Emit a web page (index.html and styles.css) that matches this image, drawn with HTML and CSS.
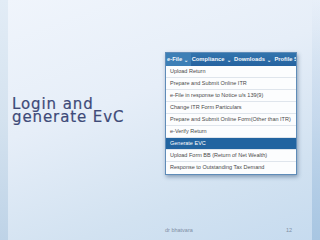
FILE: index.html
```html
<!DOCTYPE html>
<html>
<head>
<meta charset="utf-8">
<link rel="stylesheet" href="styles.css">
</head>
<body>
<div class="slide">
  <div class="strip-left"></div>
  <div class="main">
    <div class="content">
      <h1 class="title">Login and<br>generate EvC</h1>
      <div class="menu">
        <div class="bar">
          <span class="tab active">e-File <i class="caret">⌄</i></span>
          <span class="tab">Compliance <i class="caret">⌄</i></span>
          <span class="tab">Downloads <i class="caret">⌄</i></span>
          <span class="tab">Profile S</span>
        </div>
        <ul class="items">
          <li>Upload Return</li>
          <li>Prepare and Submit Online ITR</li>
          <li>e-File in response to Notice u/s 139(9)</li>
          <li>Change ITR Form Particulars</li>
          <li>Prepare and Submit Online Form(Other than ITR)</li>
          <li>e-Verify Return</li>
          <li class="selected">Generate EVC</li>
          <li>Upload Form BB (Return of Net Wealth)</li>
          <li>Response to Outstanding Tax Demand</li>
        </ul>
      </div>
    </div>
    <div class="footer">
      <span class="author">dr bhatvara</span>
      <span class="page">12</span>
    </div>
  </div>
  <div class="strip-right"></div>
</div>
</body>
</html>
```

FILE: styles.css
```css
html, body {
  margin: 0;
  padding: 0;
}
body {
  width: 320px;
  height: 240px;
  overflow: hidden;
}
.slide {
  display: flex;
  width: 320px;
  height: 240px;
  background: linear-gradient(160deg, #f0f5fc 0%, #e6eef8 40%, #d2e2f1 75%, #c6dbef 100%);
}
.strip-left {
  width: 8px;
  flex: none;
  background: linear-gradient(180deg, #e2ecf6 0%, #d4e2ef 50%, #bed3e7 100%);
}
.strip-right {
  width: 8px;
  flex: none;
  background: linear-gradient(180deg, rgba(200,218,236,0) 0%, rgba(180,204,230,0.5) 50%, #a8c6e2 100%);
}
.main {
  flex: 1;
  display: flex;
  flex-direction: column;
}
.content {
  display: flex;
  align-items: flex-start;
  padding-top: 52px;
  height: 170px;
}
.title {
  margin: 46px 0 0 4px;
  width: 153px;
  flex: none;
  font-family: "DejaVu Sans", sans-serif;
  font-weight: normal;
  font-size: 15px;
  line-height: 13px;
  color: #3e4a78;
  letter-spacing: 0.9px;
  -webkit-text-stroke: 0.2px #3e4a78;
}
.menu {
  width: 130px;
  flex: none;
  border: 1px solid #5f8cb8;
  box-shadow: 1px 2px 4px rgba(40, 70, 110, 0.45);
  background: #ffffff;
  font-family: "Liberation Sans", Arial, sans-serif;
  overflow: hidden;
}
.bar {
  display: flex;
  height: 13px;
  align-items: center;
  background: linear-gradient(180deg, #3274ad 0%, #2663a0 100%);
  white-space: nowrap;
  overflow: hidden;
}
.tab {
  color: #f4f8fc;
  font-size: 5.8px;
  font-weight: bold;
  padding: 0 2.5px 0 1px;
  height: 13px;
  line-height: 13px;
  display: flex;
  align-items: center;
  flex: none;
}
.tab.active {
  background: #3d7fb6;
}
.caret {
  font-style: normal;
  font-size: 5px;
  margin-left: 2px;
  line-height: 5px;
  position: relative;
  top: 1px;
}
.items {
  list-style: none;
  margin: 0;
  padding: 0;
}
.items li {
  height: 12px;
  line-height: 11px;
  box-sizing: border-box;
  border-bottom: 1px solid #dfe5ec;
  padding-left: 4px;
  font-size: 5.5px;
  color: #4a4a4a;
  white-space: nowrap;
  background: #fcfdfe;
}
.items li:last-child {
  border-bottom: none;
}
.items li.selected {
  background: #2264a0;
  color: #ffffff;
}
.footer {
  display: flex;
  align-items: center;
  height: 16px;
  padding-left: 157px;
  font-family: "Liberation Sans", Arial, sans-serif;
  font-size: 5.5px;
  color: #7f8ea3;
}
.author {
  width: 121px;
}
```
